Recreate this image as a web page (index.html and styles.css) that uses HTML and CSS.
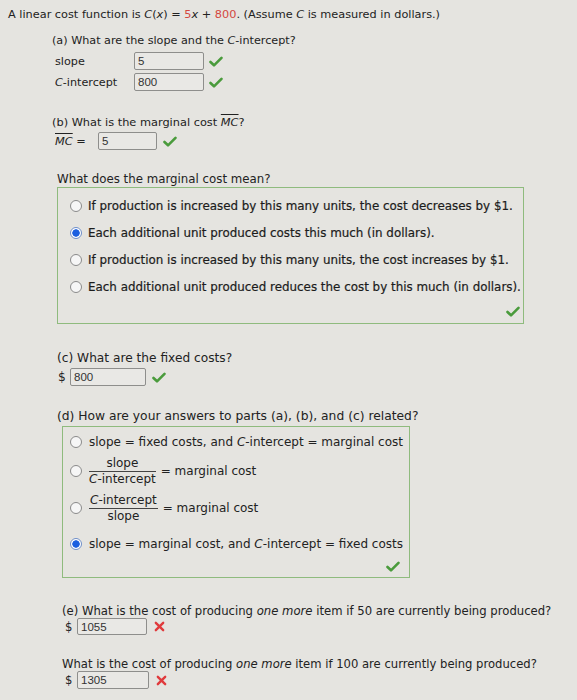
FILE: index.html
```html
<!DOCTYPE html>
<html>
<head>
<meta charset="utf-8">
<link rel="stylesheet" href="styles.css">
</head>
<body>
<div class="page">
  <div class="title">A linear cost function is <span class="math"><i>C</i>(<i>x</i>) = <span class="red">5</span><i>x</i> + <span class="red">800</span></span>. (Assume <i>C</i> is measured in dollars.)</div>

  <div class="part part-a">
    <div class="heading">(a) What are the slope and the <i>C</i>-intercept?</div>
    <div class="row row-a1">
      <span class="label">slope</span>
      <span class="field w70">5</span>
      <svg class="ok" viewBox="0 0 14 11"><path d="M1.5 6 L5 9.3 L12.5 1.8"/></svg>
    </div>
    <div class="row row-a2">
      <span class="label"><i>C</i>-intercept</span>
      <span class="field w70">800</span>
      <svg class="ok" viewBox="0 0 14 11"><path d="M1.5 6 L5 9.3 L12.5 1.8"/></svg>
    </div>
  </div>

  <div class="part part-b">
    <div class="heading">(b) What is the marginal cost <span class="bar"><i>MC</i></span>?</div>
    <div class="row row-b">
      <span class="mclabel"><span class="bar"><i>MC</i></span> = </span>
      <span class="field w59">5</span>
      <svg class="ok" viewBox="0 0 14 11"><path d="M1.5 6 L5 9.3 L12.5 1.8"/></svg>
    </div>
  </div>

  <div class="part part-m">
    <div class="heading">What does the marginal cost mean?</div>
    <div class="choices choices-m">
      <div class="opt"><span class="radio"></span><span class="vtext">If production is increased by this many units, the cost decreases by $1.</span></div>
      <div class="opt"><span class="radio on"></span><span class="vtext">Each additional unit produced costs this much (in dollars).</span></div>
      <div class="opt"><span class="radio"></span><span class="vtext">If production is increased by this many units, the cost increases by $1.</span></div>
      <div class="opt"><span class="radio"></span><span class="vtext">Each additional unit produced reduces the cost by this much (in dollars).</span></div>
      <div class="okrow"><svg class="ok" viewBox="0 0 14 11"><path d="M1.5 6 L5 9.3 L12.5 1.8"/></svg></div>
    </div>
  </div>

  <div class="part part-c">
    <div class="heading">(c) What are the fixed costs?</div>
    <div class="row row-c">
      <span class="dollar">$</span>
      <span class="field w76">800</span>
      <svg class="ok" viewBox="0 0 14 11"><path d="M1.5 6 L5 9.3 L12.5 1.8"/></svg>
    </div>
  </div>

  <div class="part part-d">
    <div class="heading">(d) How are your answers to parts (a), (b), and (c) related?</div>
    <div class="choices choices-d">
      <div class="opt opt1"><span class="radio"></span><span>slope = fixed costs, and <i>C</i>-intercept = marginal cost</span></div>
      <div class="opt optf"><span class="radio"></span>
        <span class="frac"><span class="num">slope</span><span class="den"><i>C</i>-intercept</span></span>
        <span>= marginal cost</span></div>
      <div class="opt optf"><span class="radio"></span>
        <span class="frac"><span class="num"><i>C</i>-intercept</span><span class="den">slope</span></span>
        <span>= marginal cost</span></div>
      <div class="opt opt4"><span class="radio on"></span><span>slope = marginal cost, and <i>C</i>-intercept = fixed costs</span></div>
      <div class="okrow"><svg class="ok" viewBox="0 0 14 11"><path d="M1.5 6 L5 9.3 L12.5 1.8"/></svg></div>
    </div>
  </div>

  <div class="part part-e">
    <div class="heading">(e) What is the cost of producing <i>one more</i> item if 50 are currently being produced?</div>
    <div class="row row-e">
      <span class="dollar">$</span>
      <span class="field w70">1055</span>
      <svg class="bad" viewBox="0 0 12 12"><path d="M2 2 L10 10 M10 2 L2 10"/></svg>
    </div>
  </div>

  <div class="part part-f">
    <div class="heading">What is the cost of producing <i>one more</i> item if 100 are currently being produced?</div>
    <div class="row row-f">
      <span class="dollar">$</span>
      <span class="field w72">1305</span>
      <svg class="bad" viewBox="0 0 12 12"><path d="M2 2 L10 10 M10 2 L2 10"/></svg>
    </div>
  </div>
</div>
</body>
</html>
```

FILE: styles.css
```css
html, body {
  margin: 0;
  padding: 0;
}
body {
  background: #e5e4e0;
  font-family: "DejaVu Sans", Verdana, sans-serif;
  font-size: 11px;
  color: #222222;
  width: 577px;
  height: 700px;
  overflow: hidden;
}
.page {
  padding: 7px 0 0 8px;
}
.title {
  line-height: 16px;
  font-size: 11.3px;
}
i {
  font-style: italic;
}
.red {
  color: #d4473f;
}
.heading {
  line-height: 16px;
}
.bar {
  text-decoration: overline;
}
.part-a {
  margin: 10px 0 0 44px;
  font-size: 11.2px;
}
.row {
  display: flex;
  align-items: center;
  height: 18px;
}
.row-a1 {
  margin-top: 3px;
  padding-left: 3px;
}
.row-a2 {
  margin-top: 3px;
  padding-left: 3px;
}
.label {
  width: 79px;
}
.field {
  box-sizing: border-box;
  height: 18px;
  border: 1px solid #8e8e8c;
  border-radius: 2px;
  background: #e9e8e5;
  font-family: "Liberation Sans", Arial, sans-serif;
  font-size: 11.5px;
  line-height: 16px;
  padding-left: 3px;
  color: #333;
}
.w70 { width: 70px; }
.w59 { width: 59px; }
.w76 { width: 76px; }
.w72 { width: 72px; }
.ok {
  width: 14px;
  height: 11px;
  margin-left: 5px;
  flex: none;
}
.ok path {
  fill: none;
  stroke: #4a9b3c;
  stroke-width: 2.6;
  stroke-linecap: round;
  stroke-linejoin: round;
}
.bad {
  width: 11px;
  height: 11px;
  margin-left: 7px;
  flex: none;
}
.bad path {
  fill: none;
  stroke: #e03a3c;
  stroke-width: 2.6;
  stroke-linecap: round;
}
.part-b {
  margin: 23px 0 0 44px;
  font-size: 11.35px;
}
.row-b {
  margin-top: 2px;
  padding-left: 3px;
}
.mclabel {
  width: 43px;
}
.row-b .ok { margin-left: 6px; }
.part-m {
  margin: 21px 0 0 49px;
  font-size: 11.8px;
}
.choices {
  border: 1px solid #8fbb7e;
  box-sizing: border-box;
}
.choices-m {
  margin-top: 0;
  width: 467px;
  height: 137px;
  padding: 10px 0 0 12px;
}
.vtext {
  font-size: 11.9px;
  color: #1c1c1c;
  -webkit-text-stroke: 0.2px #1c1c1c;
}
.opt {
  display: flex;
  align-items: center;
  height: 16px;
}
.choices-m .opt + .opt {
  margin-top: 11px;
}
.radio {
  box-sizing: border-box;
  width: 12px;
  height: 12px;
  border-radius: 50%;
  border: 1px solid #8a8a8a;
  background: #f6f6f6;
  margin-right: 6px;
  flex: none;
}
.radio.on {
  border: 1px solid #6f8fc9;
  background: radial-gradient(circle, #1b5fe0 0 3.4px, #ffffff 4px);
}
.okrow {
  display: flex;
  justify-content: flex-end;
}
.choices-m .okrow {
  margin-top: 11px;
  padding-right: 3px;
}
.part-c {
  margin: 26px 0 0 49px;
  font-size: 12.2px;
}
.row-c {
  margin-top: 2px;
  padding-left: 1px;
}
.dollar {
  width: 12px;
}
.row-c .ok { margin-left: 6px; }
.part-d {
  margin: 22px 0 0 49px;
  font-size: 12.3px;
}
.choices-d {
  margin: 2px 0 0 5px;
  width: 348px;
  height: 152px;
  padding: 7px 0 0 7px;
  font-size: 12px;
}
.choices-d .radio {
  margin-right: 7px;
}
.optf {
  height: 32px;
  margin-top: 5px;
}
.frac {
  display: inline-flex;
  flex-direction: column;
  align-items: center;
  margin-right: 5px;
  line-height: 15px;
}
.frac .num {
  border-bottom: 1px solid #444;
  padding: 0 1px;
  align-self: stretch;
  text-align: center;
}
.opt4 {
  margin-top: 12px;
}
.choices-d .okrow {
  margin-top: 9px;
  padding-right: 9px;
}
.part-e {
  margin: 25px 0 0 54px;
  font-size: 11.65px;
}
.row-e {
  margin-top: -1px;
  padding-left: 3px;
  height: 17px;
}
.row-e .field { height: 17px; }
.part-f {
  margin: 21px 0 0 54px;
  font-size: 11.6px;
}
.row-f {
  margin-top: -1px;
  padding-left: 3px;
}
```
